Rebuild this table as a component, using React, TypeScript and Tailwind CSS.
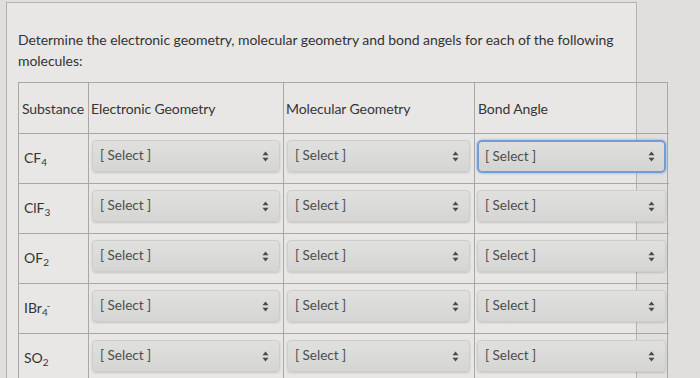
import React from "react";

function Arrows() {
  return (
    <svg width="7" height="11" viewBox="0 0 7 11" className="shrink-0">
      <path d="M3.5 0.5 L6.5 4.3 L0.5 4.3 Z" fill="#4a4a4a" />
      <path d="M3.5 10.5 L6.5 6.7 L0.5 6.7 Z" fill="#4a4a4a" />
    </svg>
  );
}

function Select({ focused = false }: { focused?: boolean }) {
  return (
    <div
      className={
        focused
          ? "flex h-[33px] w-full items-center justify-between rounded-[5px] border-2 border-[#729cd6] bg-gradient-to-b from-[#dfdfdd] to-[#d4d4d2] pl-[6px] pr-[9px] shadow-[0_0_2px_1px_rgba(114,156,214,0.4)]"
          : "flex h-[32px] w-full items-center justify-between rounded-[4px] border border-[#cdcdcb] bg-gradient-to-b from-[#e0e0de] to-[#d5d5d3] pl-[7px] pr-[10px] shadow-[0_1px_2px_rgba(0,0,0,0.15)]"
      }
    >
      <span className="text-[13.5px] leading-none text-[#4d4d4d]">[ Select ]</span>
      <Arrows />
    </div>
  );
}

const rows: { label: React.ReactNode }[] = [
  { label: (<>CF<sub className="text-[10px]">4</sub></>) },
  { label: (<>ClF<sub className="text-[10px]">3</sub></>) },
  { label: (<>OF<sub className="text-[10px]">2</sub></>) },
  {
    label: (
      <>
        IBr<sub className="text-[10px]">4</sub>
        <sup className="ml-[-1px] text-[9px]">-</sup>
      </>
    ),
  },
  { label: (<>SO<sub className="text-[10px]">2</sub></>) },
];

export default function App() {
  return (
    <div className="h-[378px] w-[700px] overflow-hidden bg-[#e0dfdd] font-['Lato','Noto_Sans',sans-serif] text-[#353535]">
      <div className="ml-[6px] mt-[2px] h-[380px] w-[631px] border-l border-r border-t border-[#b3b2b0] bg-[#e8e7e5] pl-[11px]">
        <p className="pt-[26px] text-[14px] leading-[21px] tracking-[-0.05px] text-[#333333]">
          Determine the electronic geometry, molecular geometry and bond angels for each of the following
          <br />
          molecules:
        </p>
        <div className="mt-[11px] grid w-[650px] grid-cols-[70px_195px_191px_194px] border-l border-r border-t border-[#a9a8a6]">
          <div className="flex h-[51px] items-center border-b border-r border-[#a9a8a6] pl-[3px] text-[14px] tracking-[-0.1px]">Substance</div>
          <div className="flex h-[51px] items-center border-b border-r border-[#a9a8a6] pl-[2px] text-[14px] tracking-[-0.1px]">Electronic Geometry</div>
          <div className="flex h-[51px] items-center border-b border-r border-[#a9a8a6] pl-[2px] text-[14px] tracking-[-0.1px]">Molecular Geometry</div>
          <div className="flex h-[51px] items-center border-b border-[#a9a8a6] pl-[3px] text-[14px] tracking-[-0.1px]">Bond Angle</div>
          {rows.map((r, i) => (
            <React.Fragment key={i}>
              <div className="h-[50px] border-b border-r border-[#a9a8a6] pl-[5px] pt-[14px] text-[14px] leading-[20px]">{r.label}</div>
              <div className="h-[50px] border-b border-r border-[#a9a8a6] pl-[3px] pr-[3px] pt-[6px]">
                <Select />
              </div>
              <div className="h-[50px] border-b border-r border-[#a9a8a6] pl-[3px] pr-[4px] pt-[6px]">
                <Select />
              </div>
              <div className="h-[50px] border-b border-[#a9a8a6] pl-[2px] pr-[3px] pt-[6px]">
                <Select focused={i === 0} />
              </div>
            </React.Fragment>
          ))}
        </div>
      </div>
    </div>
  );
}
